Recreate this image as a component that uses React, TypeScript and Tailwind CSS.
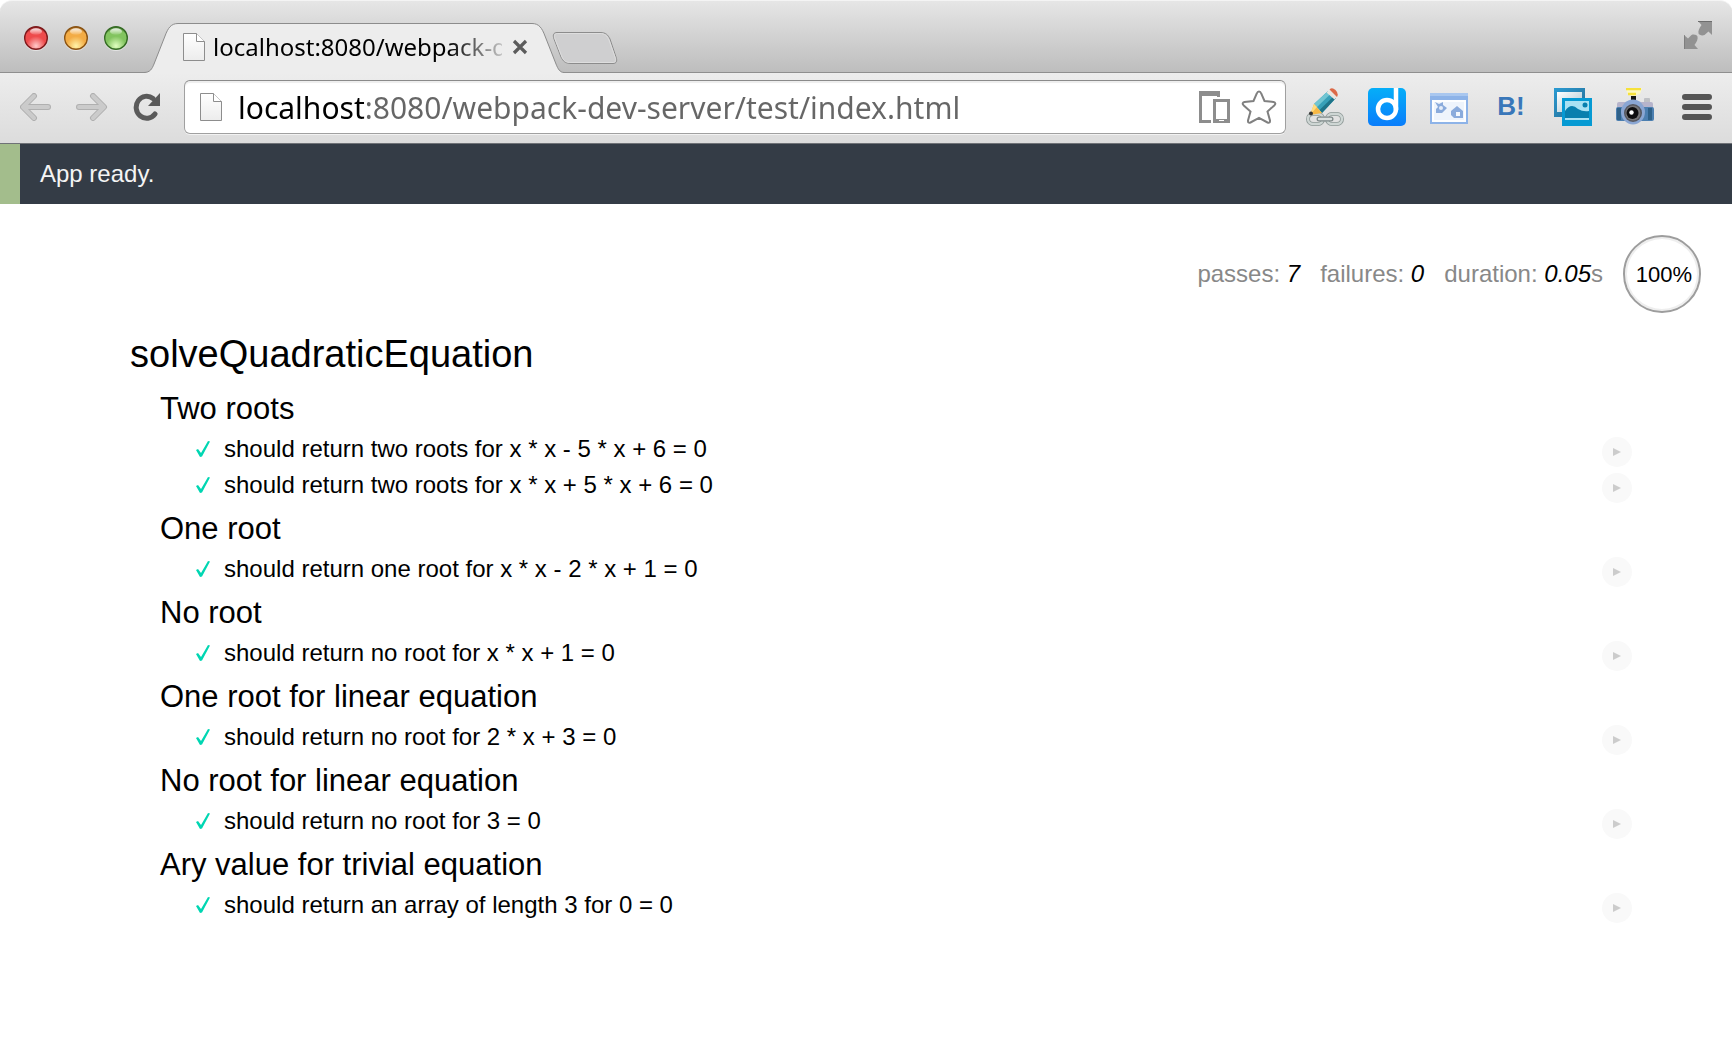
import { ReactNode } from "react";

interface Suite {
  title: string;
  tests: string[];
}

const suites: Suite[] = [
  {
    title: "Two roots",
    tests: [
      "should return two roots for x * x - 5 * x + 6 = 0",
      "should return two roots for x * x + 5 * x + 6 = 0",
    ],
  },
  { title: "One root", tests: ["should return one root for x * x - 2 * x + 1 = 0"] },
  { title: "No root", tests: ["should return no root for x * x + 1 = 0"] },
  {
    title: "One root for linear equation",
    tests: ["should return no root for 2 * x + 3 = 0"],
  },
  {
    title: "No root for linear equation",
    tests: ["should return no root for 3 = 0"],
  },
  {
    title: "Ary value for trivial equation",
    tests: ["should return an array of length 3 for 0 = 0"],
  },
];

const lights = [
  { name: "Close window", id: "red", edge: "#7d1a1c", mid: "#ee4b4c", glow: "#ffc9c9" },
  { name: "Minimize window", id: "amber", edge: "#8a5313", mid: "#f3ac45", glow: "#fff3a8" },
  { name: "Zoom window", id: "green", edge: "#356b24", mid: "#82c45f", glow: "#e0ffc0" },
];

const TrafficLight = ({ name, id, edge, mid, glow }: (typeof lights)[number]) => (
  <button type="button" aria-label={name} className="size-6">
    <svg viewBox="0 0 24 24" className="size-6 overflow-visible">
      <defs>
        <radialGradient id={id} cx="0.5" cy="0.85" r="0.85">
          <stop offset="0" stopColor={glow} />
          <stop offset="0.5" stopColor={mid} />
          <stop offset="0.8" stopColor={mid} />
          <stop offset="1" stopColor={edge} />
        </radialGradient>
        <linearGradient id={`${id}-shine`} x1="0" y1="0" x2="0" y2="1">
          <stop offset="0" stopColor="#fff" stopOpacity="0.9" />
          <stop offset="1" stopColor="#fff" stopOpacity="0.1" />
        </linearGradient>
      </defs>
      <circle cx="12" cy="13" r="12" fill="#fff" opacity="0.5" />
      <circle cx="12" cy="12" r="11.3" fill={`url(#${id})`} stroke={edge} strokeWidth="1.4" />
      <ellipse cx="12" cy="5.5" rx="6" ry="3.3" fill={`url(#${id}-shine)`} />
    </svg>
  </button>
);

const PageIcon = () => (
  <svg viewBox="0 0 22 30" className="h-[30px] w-[22px] shrink-0">
    <defs>
      <linearGradient id="page" x1="0" y1="0" x2="0" y2="1">
        <stop offset="0" stopColor="#fff" />
        <stop offset="1" stopColor="#ececec" />
      </linearGradient>
    </defs>
    <path d="M.5 1.5H13.5L21.5 9.5V28.5H.5Z" fill="url(#page)" stroke="#8d8d8d" />
    <path d="M13.5 1.5V9.5H21.5" fill="#fff" stroke="#8d8d8d" />
  </svg>
);

const ToolButton = ({ label, children }: { label: string; children: ReactNode }) => (
  <button type="button" aria-label={label} className="shrink-0">
    {children}
  </button>
);

const TabStrip = () => (
  <div className="flex h-[73px] items-end rounded-t-xl border-t border-[#f4f4f4] bg-linear-to-b from-[#e6e6e6] to-[#bdbdbd] shadow-[inset_0_-1px_0_#8f8f8f]">
    <div className="flex gap-4 self-start pt-[25px] pl-6">
      {lights.map((light) => (
        <TrafficLight key={light.id} {...light} />
      ))}
    </div>

    <div className="relative ml-4 h-[50px] w-[420px]">
      <svg viewBox="0 0 420 50" className="absolute inset-0 h-[50px] w-[420px]">
        <path
          d="M0 50V49.5C6 49.5 8 46 10 41L21 13C24 5 27 .5 34 .5H388C395 .5 398 5 401 13L412 41C414 46 416 49.5 420 49.5V50Z"
          fill="#ededed"
        />
        <path
          d="M0 49.5C6 49.5 8 46 10 41L21 13C24 5 27 .5 34 .5H388C395 .5 398 5 401 13L412 41C414 46 416 49.5 420 49.5"
          fill="none"
          stroke="#8c8c8c"
        />
      </svg>
      <div className="relative flex h-full items-center pb-0.5 pl-[39px]">
        <PageIcon />
        <span className="ml-2 w-[289px] text-[24px] leading-8 whitespace-nowrap mask-[linear-gradient(to_right,black_235px,transparent_300px)]">
          localhost:8080/webpack-d
        </span>
        <button type="button" aria-label="Close tab" className="ml-2.5">
          <svg viewBox="0 0 16 16" className="size-4">
            <path d="M2 2L14 14M14 2L2 14" stroke="#5c5c5c" strokeWidth="3.2" />
          </svg>
        </button>
      </div>
    </div>

    <button type="button" aria-label="New tab" className="mb-2 -ml-3">
      <svg viewBox="0 0 66 34" className="h-[34px] w-[66px]">
        <path
          d="M5 1.5H48C54 1.5 56 4 58 8L64 26C65.5 30 64.5 32.5 61 32.5H19C13 32.5 11 30 9 26L2 8C.5 4 1.5 1.5 5 1.5Z"
          fill="#cfcfd0"
          stroke="#8c8c8c"
        />
        <path
          d="M5.5 2.5H48C53 2.5 55 5 57 9L63 26C64 30 63 31.5 61 31.5H19C14 31.5 12 30 10 26L3 8C2 4 3 2.5 5.5 2.5Z"
          fill="none"
          stroke="#dedede"
        />
      </svg>
    </button>

    <button type="button" aria-label="Full screen" className="mr-5 ml-auto self-start pt-5">
      <svg viewBox="0 0 28 28" className="size-7">
        <path
          d="M14 0H28V14L24.5 10.5L20.5 14C18 15 15 14 14.5 12.5C14 10 15 7.5 17.5 4ZM0 28V14L4 17.5L7.5 14C10 13 13 14 13.5 15.5C14 18 13 20.5 10.5 24L14 28Z"
          fill="#929292"
        />
        <path d="M14 .5H28M0 14V28" stroke="#6d6d6d" />
      </svg>
    </button>
  </div>
);

const PencilLinkIcon = () => (
  <svg viewBox="0 0 38 38" className="size-[38px]">
    <g fill="none">
      <rect x="2" y="26" width="15" height="10" rx="5" stroke="#8f9a98" strokeWidth="4" />
      <rect x="21" y="26" width="15" height="10" rx="5" stroke="#8f9a98" strokeWidth="4" />
      <rect x="2" y="26" width="15" height="10" rx="5" stroke="#ced6d4" strokeWidth="2.4" />
      <rect x="21" y="26" width="15" height="10" rx="5" stroke="#ced6d4" strokeWidth="2.4" />
      <g strokeLinecap="round">
        <path d="M13 31H25" stroke="#7f8a8a" strokeWidth="5" />
        <path d="M13 31H25" stroke="#d9dfdd" strokeWidth="2.4" />
      </g>
    </g>
    <path d="M22 3L30 10L16 25L8 16Z" fill="#37a0b8" />
    <path d="M22 3L25 5.5L11 19L8 16Z" fill="#70c5d2" />
    <path d="M28 8L30 10L16 25L13.5 22Z" fill="#1e7489" />
    <path d="M20.5 4.5L23.5 1.5L31.5 8.5L28.5 11.5Z" fill="#e9e5df" />
    <path d="M23.5 1.5Q26 -1 29.5 2Q33 5.5 31 9Z" fill="#dc6947" />
    <path d="M8 16L16 25L4 27Z" fill="#f7b845" />
    <path d="M8 16L11 19L4 27Z" fill="#ffdc81" />
    <circle cx="5" cy="25.5" r="2" fill="#333" />
  </svg>
);

const DiigoIcon = () => (
  <svg viewBox="0 0 38 38" className="size-[38px]">
    <defs>
      <linearGradient id="diigo" x1="0" y1="0" x2="0" y2="1">
        <stop offset="0" stopColor="#05aef8" />
        <stop offset="1" stopColor="#0a7dfb" />
      </linearGradient>
    </defs>
    <rect width="38" height="38" rx="5" fill="url(#diigo)" />
    <circle cx="19" cy="21" r="9" fill="none" stroke="#fff" strokeWidth="4.5" />
    <path d="M28 0V22" stroke="#fff" strokeWidth="4.5" />
  </svg>
);

const WindowIcon = () => (
  <svg viewBox="0 0 38 38" className="size-[38px]">
    <rect x="0" y="5" width="38" height="31" fill="#8db3e8" />
    <rect x="0" y="5" width="38" height="3" fill="#a9c7ef" />
    <rect x="2" y="12" width="34" height="22" fill="#fdfeff" />
    <rect x="4" y="14" width="30" height="18" fill="#eef4fc" />
    <g fill="#8aabdc">
      <path d="M5 14L9 16L13 14V17L17 20L12 25H6V21L8 19Z" />
      <path d="M27 18L33 23V30H24L21 27V23Z" />
    </g>
    <circle cx="11" cy="20" r="2" fill="#e4edf9" />
    <path d="M26 24H30V28H26Z" fill="#f2f7fd" />
  </svg>
);

const PicturesIcon = () => (
  <svg viewBox="0 0 38 38" className="size-[38px]">
    <defs>
      <linearGradient id="pictures" x1="0" y1="0" x2="1" y2="1">
        <stop offset="0" stopColor="#2a9bd3" />
        <stop offset="1" stopColor="#276b91" />
      </linearGradient>
      <linearGradient id="sheet" x1="0" y1="0" x2="1" y2="1">
        <stop offset="0" stopColor="#ffffff" />
        <stop offset="1" stopColor="#a9c4cf" />
      </linearGradient>
    </defs>
    <rect width="31" height="29" fill="url(#pictures)" />
    <rect x="3" y="4" width="25" height="20" fill="url(#sheet)" />
    <rect x="8" y="10" width="30" height="28" fill="#069ad3" />
    <rect x="11" y="13" width="24" height="19" fill="#a9e1f3" />
    <path d="M11 23Q17 14 24 21Q29 24 35 23V30H11Z" fill="#087fae" />
    <circle cx="31" cy="17" r="2.5" fill="#087fae" />
  </svg>
);

const CameraIcon = () => (
  <svg viewBox="0 0 38 38" className="size-[38px]">
    <path d="M10 0H26L24 6L18 8L12 7Z" fill="#fdf8c4" />
    <path d="M10 1H25M12 6H20" fill="none" stroke="#f6e13a" strokeWidth="2.5" />
    <rect x="15" y="8" width="5" height="5" fill="#151515" />
    <rect x="28" y="10" width="6" height="6" rx="1" fill="#bfc1c5" />
    <rect x="1" y="14" width="36" height="8" rx="2" fill="#b6b4cb" />
    <rect x="0" y="19" width="38" height="14" rx="2" fill="#4c7fb0" />
    <path d="M3 20V32M34 20V32" stroke="#2f6189" strokeWidth="4" />
    <ellipse cx="17" cy="24" rx="12" ry="12.5" fill="#8aa6d3" />
    <circle cx="17" cy="25" r="9" fill="#55575f" />
    <circle cx="17" cy="25" r="7.5" fill="#77777a" />
    <circle cx="16.5" cy="25" r="6" fill="#0e0e10" />
    <circle cx="15.5" cy="24.5" r="2.2" fill="#fff" />
  </svg>
);

const Toolbar = () => (
  <div className="flex h-[71px] items-center border-b border-[#6f7277] bg-linear-to-b from-[#ededed] to-[#dcdcdc] px-5 pb-0.5">
    <div className="flex gap-6">
      <ToolButton label="Back">
        <svg viewBox="0 0 32 28" className="h-7 w-8" fill="none" strokeLinecap="round" strokeLinejoin="round">
          <path d="M14 3L3 14L14 25M4 14H28" stroke="#b0b0b0" strokeWidth="6" />
          <path d="M14 3L3 14L14 25M4 14H28" stroke="#cbcbcb" strokeWidth="4" />
        </svg>
      </ToolButton>
      <ToolButton label="Forward">
        <svg viewBox="0 0 32 28" className="h-7 w-8" fill="none" strokeLinecap="round" strokeLinejoin="round">
          <path d="M17 3L28 14L17 25M27 14H3" stroke="#b0b0b0" strokeWidth="6" />
          <path d="M17 3L28 14L17 25M27 14H3" stroke="#cbcbcb" strokeWidth="4" />
        </svg>
      </ToolButton>
      <ToolButton label="Reload">
        <svg viewBox="0 0 28 28" className="size-7">
          <path
            d="M23 21A10.5 11 0 1 1 21 5.5"
            fill="none"
            stroke="#5a5a5a"
            strokeWidth="5"
            strokeLinecap="round"
          />
          <path d="M28 0V13H16Z" fill="#5a5a5a" />
        </svg>
      </ToolButton>
    </div>

    <div className="ml-6 flex h-[54px] min-w-0 flex-1 items-center rounded-md border border-[#a0a0a0] border-t-[#8a8a8a] bg-white pr-2 pl-[15px] shadow-[0_1px_0_#f2f2f2,inset_0_2px_1px_#eeeeee]">
      <PageIcon />
      {/* host in black, the rest of the address in gray */}
      <input
        type="text"
        aria-label="Address"
        defaultValue="localhost:8080/webpack-dev-server/test/index.html"
        className="ml-4 h-10 min-w-0 flex-1 bg-linear-[to_right,#000_126px,#666_126px] bg-clip-text text-[30px] text-transparent outline-none"
      />
      <ToolButton label="Devices">
        <svg viewBox="0 0 32 32" className="size-8">
          <path d="M0 0H21V6H18V5H3V29H12V32H0Z" fill="#8d8d8d" />
          <path d="M14 8H31V32H14ZM17 11V28H28V11ZM20 29V30H25V29Z" fill="#8d8d8d" fillRule="evenodd" />
        </svg>
      </ToolButton>
      <span className="ml-2.5 flex">
        <ToolButton label="Bookmark this page">
          <svg viewBox="0 0 36 34" className="h-[34px] w-9">
            <path
              d="M18 1.5Q19.5 1.5 20.2 3.5L23.5 11L32.5 12Q35.5 13 33.5 15.2L26.5 21.5L29 30.5Q29.2 33.5 26.5 32.5L18 27.8L9.5 32.5Q6.8 33.5 7 30.5L9.5 21.5L2.5 15.2Q.5 13 3.5 12L12.5 11L15.8 3.5Q16.5 1.5 18 1.5Z"
              fill="#fff"
              stroke="#808080"
              strokeWidth="2"
            />
          </svg>
        </ToolButton>
      </span>
    </div>

    <div className="ml-5 flex items-center gap-6">
      <ToolButton label="Edit link"><PencilLinkIcon /></ToolButton>
      <ToolButton label="Diigo"><DiigoIcon /></ToolButton>
      <ToolButton label="Window"><WindowIcon /></ToolButton>
      <button
        type="button"
        className="w-[38px] pb-0.5 font-['Liberation_Sans'] text-[26px] leading-7 font-bold text-[#3977b9]"
      >
        B!
      </button>
      <ToolButton label="Pictures"><PicturesIcon /></ToolButton>
      <ToolButton label="Camera"><CameraIcon /></ToolButton>
    </div>
    <span className="ml-7 flex">
      <ToolButton label="Menu">
        <svg viewBox="0 0 30 26" className="h-[26px] w-[30px]">
          <path d="M3 3H27M3 13H27M3 23H27" stroke="#555" strokeWidth="6" strokeLinecap="round" />
        </svg>
      </ToolButton>
    </span>
  </div>
);

const Stats = () => (
  <div className="flex items-center justify-end gap-5 pt-[31px] pr-[31px] text-[24px] text-[#888]">
    <p>
      passes: <em className="text-black">7</em>
    </p>
    <p>
      failures: <em className="text-black">0</em>
    </p>
    <p>
      duration: <em className="text-black">0.05</em>s
    </p>
    <div className="flex size-[78px] items-center justify-center rounded-full border-2 border-[#9d9d9d] pl-1 text-[22px] text-black shadow-[inset_0_0_0_2px_#eeeeee]">
      100%
    </div>
  </div>
);

const Report = () => (
  <section className="pt-4 pr-[100px] pl-[130px] text-black">
    <h1 className="mb-1 text-[38px] leading-[50px]">solveQuadraticEquation</h1>
    {suites.map((suite) => (
      <div key={suite.title} className="pl-[30px]">
        <h2 className="pt-2 pb-1 text-[31px] leading-9">{suite.title}</h2>
        <ul className="pl-9">
          {suite.tests.map((test) => (
            <li key={test} className="flex items-center text-[24px] leading-9">
              <svg viewBox="0 0 14 16" className="mr-3.5 h-4 w-3.5" aria-label="passed">
                <path d="M0 9L2 8L5 12L12 0L14 .5L6 15.5L4 16Z" fill="#00d6b2" />
              </svg>
              {test}
              <a
                href="#replay"
                aria-label={`Run ${test}`}
                className="mt-1.5 ml-auto flex size-[30px] items-center justify-center rounded-full bg-[#f9f9f9]"
              >
                <svg viewBox="0 0 8 8" className="size-2">
                  <path d="M0 0L8 4L0 8Z" fill="#ccc" />
                </svg>
              </a>
            </li>
          ))}
        </ul>
      </div>
    ))}
  </section>
);

export default function App() {
  return (
    <div className="min-h-screen bg-white font-['Noto_Sans',sans-serif] text-black">
      <header>
        <TabStrip />
        <Toolbar />
      </header>
      <main className="font-['Liberation_Sans',Arial,sans-serif]">
        <div
          role="status"
          className="flex h-[60px] items-center border-l-[20px] border-[#a3bd8c] bg-[#343c46] pl-5 text-[24px] text-[#f4f4f4]"
        >
          App ready.
        </div>
        <Stats />
        <Report />
      </main>
    </div>
  );
}
